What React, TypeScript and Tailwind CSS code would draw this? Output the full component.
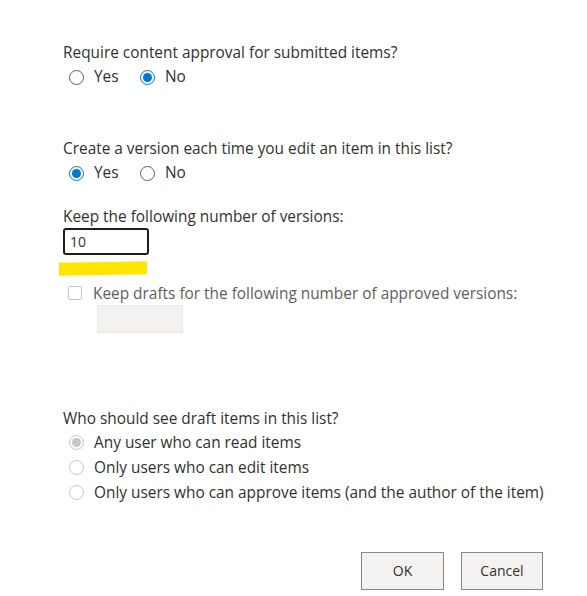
import React from "react";

function Radio({ checked, disabled }: { checked?: boolean; disabled?: boolean }) {
  if (disabled) {
    return (
      <span className="w-[15px] h-[15px] rounded-full border border-[#c8c6c4] bg-white flex items-center justify-center shrink-0">
        {checked && <span className="w-[9px] h-[9px] rounded-full bg-[#c8c6c4]" />}
      </span>
    );
  }
  return (
    <span
      className={
        "w-[15px] h-[15px] rounded-full border flex items-center justify-center shrink-0 bg-white " +
        (checked ? "border-[#0078d4]" : "border-[#605e5c]")
      }
    >
      {checked && <span className="w-[9px] h-[9px] rounded-full bg-[#0078d4]" />}
    </span>
  );
}

export default function App() {
  return (
    <div
      className="w-[587px] h-[596px] bg-white text-[#323130] text-[15.4px] leading-[20px] relative"
      style={{ fontFamily: '"Open Sans", "Noto Sans", sans-serif' }}
    >
      <div className="pl-[63px] pt-[43px] flex flex-col">
        <div className="h-[20px]">Require content approval for submitted items?</div>
        <div className="flex items-center h-[24px] mt-[2px] pl-[6px]">
          <Radio />
          <span className="ml-[10px] w-[46px]">Yes</span>
          <Radio checked />
          <span className="ml-[10px]">No</span>
        </div>

        <div className="h-[20px] mt-[50px]">Create a version each time you edit an item in this list?</div>
        <div className="flex items-center h-[24px] mt-[2px] pl-[6px]">
          <Radio checked />
          <span className="ml-[10px] w-[46px]">Yes</span>
          <Radio />
          <span className="ml-[10px]">No</span>
        </div>

        <div className="h-[20px] mt-[22px]">Keep the following number of versions:</div>
        <div className="mt-[1px] w-[86px] h-[27px] border-2 border-[#201f1e] rounded-[3px] flex items-center pl-[5px] text-[14px]">
          10
        </div>
        <div className="mt-[7px] -ml-[4px] w-[88px] h-[13px] bg-[#ffe600] -skew-y-1" />

        <div className="flex items-start mt-[10px] pl-[5px]">
          <span className="w-[14px] h-[14px] mt-[1px] rounded-[2px] border border-[#c8c6c4] bg-white shrink-0" />
          <span className="ml-[11px] text-[#605e5c] -mt-[1px]">Keep drafts for the following number of approved versions:</span>
        </div>
        <div className="ml-[34px] mt-[1px] w-[86px] h-[28px] border border-[#edebe9] bg-[#f3f2f1]" />

        <div className="h-[20px] mt-[76px]">Who should see draft items in this list?</div>
        <div className="flex flex-col mt-[1px] pl-[6px]">
          <div className="flex items-center h-[25px]">
            <Radio checked disabled />
            <span className="ml-[10px]">Any user who can read items</span>
          </div>
          <div className="flex items-center h-[25px]">
            <Radio disabled />
            <span className="ml-[10px]">Only users who can edit items</span>
          </div>
          <div className="flex items-center h-[25px]">
            <Radio disabled />
            <span className="ml-[10px]">Only users who can approve items (and the author of the item)</span>
          </div>
        </div>
      </div>

      <div className="flex justify-end gap-[17px] pr-[44px] mt-[47px]">
        <button className="w-[83px] h-[38px] border border-[#8a8886] bg-[#f3f2f1] text-[14px] text-[#323130]">OK</button>
        <button className="w-[82px] h-[38px] border border-[#8a8886] bg-[#f3f2f1] text-[14px] text-[#323130]">Cancel</button>
      </div>
    </div>
  );
}
